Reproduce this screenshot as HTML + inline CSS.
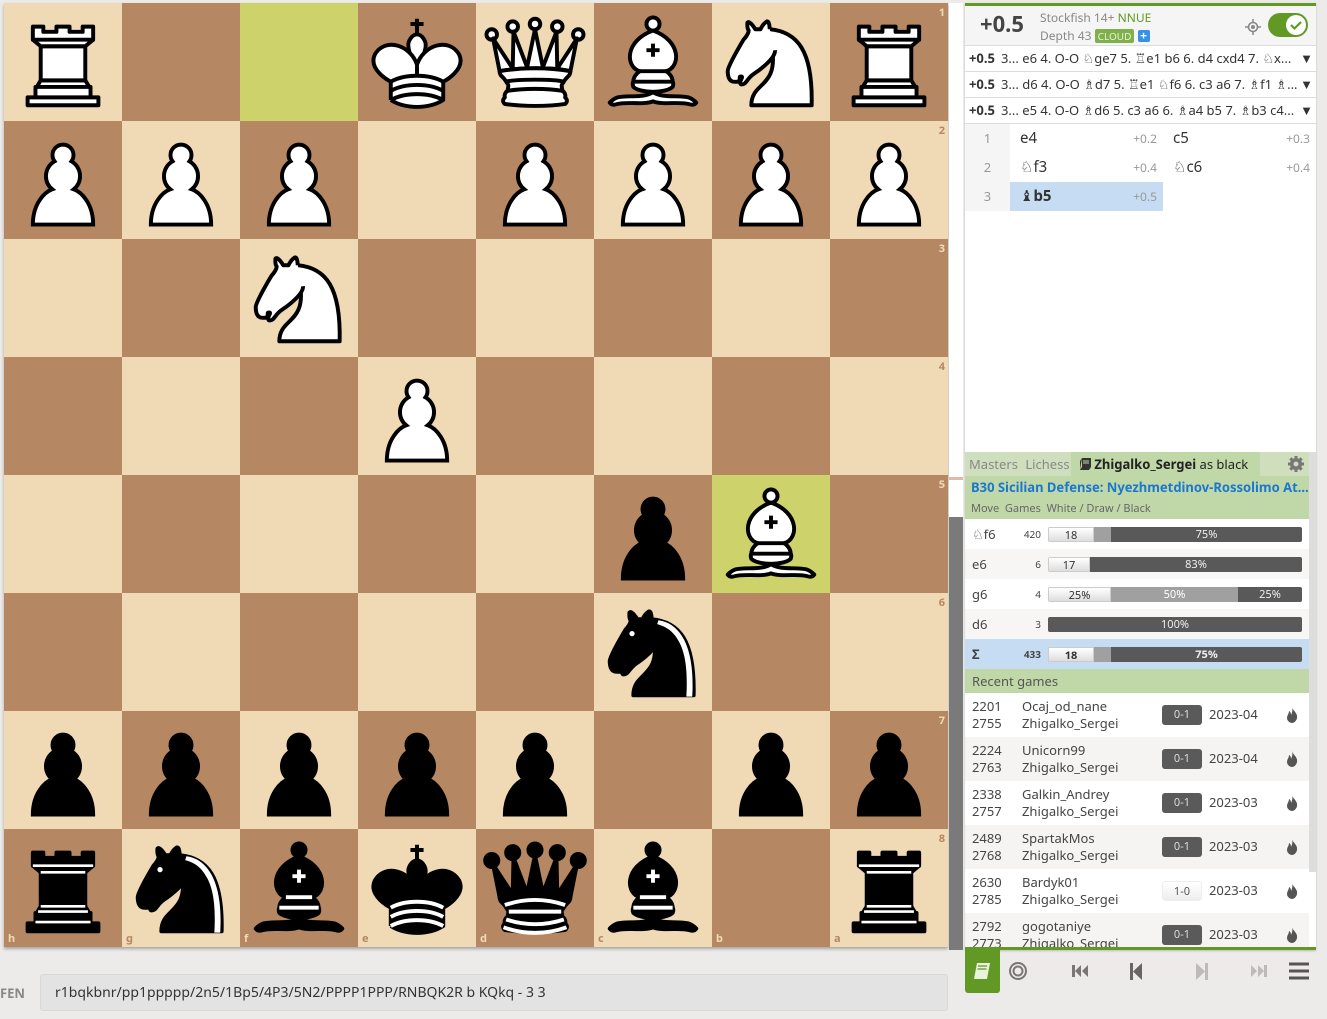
<!DOCTYPE html>
<html><head><meta charset="utf-8"><style>
*{box-sizing:border-box;margin:0;padding:0}
body{width:1327px;height:1019px;background:#ecebe9;font-family:"Noto Sans","Liberation Sans","DejaVu Sans",sans-serif;position:relative;overflow:hidden;color:#4d4d4d}
#board{position:absolute;left:4px;top:3px;width:944px;height:944px;display:grid;grid-template-columns:repeat(8,118px);grid-template-rows:repeat(8,118px);box-shadow:0 2px 3px rgba(0,0,0,.3)}
.s{position:relative;background:#f0d9b5}
.d{background:#b58863}
.h{background:#cdd26a}
.s svg{position:absolute;left:0;top:0;width:118px;height:118px}
.cr{position:absolute;right:3px;top:2px;font-size:11px;font-weight:bold}
.cf{position:absolute;left:4px;bottom:1px;font-size:11px;font-weight:bold}
.s .cr,.s .cf{color:#b58863}.d .cr,.d .cf{color:#f0d9b5}
#gauge{position:absolute;left:949px;top:3px;width:14px;height:947px;background:#7a7a7a}
#gauge .wt{position:absolute;left:0;top:0;width:14px;height:514px;background:#fff}
#gauge .rl{position:absolute;left:0;top:474px;width:14px;height:3px;background:#e8b6a6}
#panel{position:absolute;left:965px;top:3px;width:351px;height:947px;background:#fff;border-top:3px solid #629924;border-bottom:3px solid #629924;box-shadow:0 1px 2px rgba(0,0,0,.2)}
.ceh{height:40px;background:#f5f5f5;border-bottom:1px solid #ddd;position:relative}
.pv{height:26px;border-bottom:1px solid #ddd;font-size:13px;line-height:25px;padding-left:4px;white-space:nowrap;position:relative;color:#333}
.pv b{margin-right:6px}
.pv .tri{position:absolute;right:3px;top:0;font-size:13px}
.mv{position:relative;height:29px;font-size:15px}
.mv .i{position:absolute;left:0;top:0;width:45px;height:29px;background:#f5f5f5;text-align:center;line-height:29px;color:#999;font-size:13px}
.mv .m{position:absolute;top:0;height:29px;width:153px;line-height:29px;padding-left:10px;color:#333}
.mv .m span{position:absolute;right:6px;font-size:12px;color:#999}
#exp{position:absolute;left:0;top:446px;width:344px;bottom:0;font-size:12px}
.tabs{height:24px;background:#cfdfbe;position:relative;font-size:13px;line-height:24px;color:#888}
.op{height:23px;background:#c0d8a8;color:#1b78d0;font-weight:bold;font-size:13px;line-height:23px;padding-left:6px;white-space:nowrap;overflow:hidden}
.hd{height:20px;background:#c0d8a8;color:#666;font-size:11px;line-height:20px;padding-left:6px}
.r{height:30px;position:relative;font-size:13px;line-height:30px;color:#444}
.r .mm{position:absolute;left:7px}
.r .n{position:absolute;left:50px;width:26px;text-align:right;font-size:10px}
.bar{position:absolute;left:83px;top:8px;width:254px;height:15px;border-radius:2px;overflow:hidden;display:flex;font-size:11px;line-height:15px;text-align:center}
.bw{background:linear-gradient(#fff,#ddd);color:#333;border:1px solid #ccc}
.bd{background:#a0a0a0;color:#fff}
.bb{background:#595959;color:#eee}
.rg{height:24px;background:#c0d8a8;line-height:24px;padding-left:7px;font-size:13px;color:#555}
.g{height:44px;position:relative;font-size:13px;color:#444;line-height:17px}
.g .e{position:absolute;left:7px;top:5px}
.g .nm{position:absolute;left:57px;top:5px}
.g .res{position:absolute;left:197px;top:12px;width:40px;height:20px;border-radius:3px;background:#5a5a5a;color:#ddd;font-size:11px;text-align:center;line-height:20px}
.g .res.wr{background:linear-gradient(#fff,#eee);color:#555;border:1px solid #eee}
.g .dt{position:absolute;left:244px;top:13px}
.g .fl{position:absolute;left:321px;top:14px;width:12px;height:16px}
.ctl{position:absolute;top:953px;height:40px}
</style></head><body>
<svg width="0" height="0" style="position:absolute">
<defs>
<symbol id="P" viewBox="0 0 45 45"><path d="m22.5 9c-2.21 0-4 1.79-4 4 0 .89.29 1.71.78 2.38C17.33 16.5 16 18.59 16 21c0 2.030.94 3.84 2.41 5.03C15.41 27.09 11 31.58 11 39.5H34C34 31.58 29.59 27.090 26.59 26.03 28.06 24.84 29 23.03 29 21 29 18.59 27.67 16.5 25.72 15.38 26.21 14.71 26.5 13.89 26.5 13c0-2.21-1.79-4-4-4z" stroke-width="1.5"/></symbol>
<symbol id="R" viewBox="0 0 45 45"><g stroke-width="1.5" stroke-linejoin="round"><path d="M9 39h27v-3H9zM12.5 32l1.5-2.5h17l1.5 2.5zM12 36v-4h21v4z"/><path d="M14 29.5v-13h17v13z"/><path d="M14 16.5L11 14h23l-3 2.5zM11 14V9h4v2h5V9h5v2h5V9h4v5z"/></g></symbol>
<symbol id="Rb" viewBox="0 0 45 45"><g stroke-width="1.5" stroke-linejoin="round"><path d="M9 39h27v-3H9zM12.5 32l1.5-2.5h17l1.5 2.5zM12 36v-4h21v4z"/><path d="M14 29.5v-13h17v13z"/><path d="M14 16.5L11 14h23l-3 2.5zM11 14V9h4v2h5V9h5v2h5V9h4v5z"/><path d="M12 35.5h21M13 31.5h19M14 29.5h17M14 16.5h17M11 14h23" stroke="#fff" stroke-width="1"/></g></symbol>
<symbol id="N" viewBox="0 0 45 45"><g stroke-width="1.5" stroke-linejoin="round"><path d="M22 10c10.5 1 16.5 8 16 29H15c0-9 10-6.5 8-21"/><path d="M24 18c.38 2.91-5.55 7.37-8 9-3 2-2.82 4.34-5 4-1.04-.94 1.41-3.04 0-3-1 0 .19 1.23-1 2-1 0-4 1-4-4 0-2 6-12 6-12s1.89-1.9 2-3.5c-.73-.99-.5-2-.5-3 1-1 3 2.5 3 2.5h2s.78-1.99 2.5-3c1 0 1 3 1 3"/></g></symbol>
<symbol id="Nb" viewBox="0 0 45 45"><g stroke-width="1.5" stroke-linejoin="round"><path d="M22 10c10.5 1 16.5 8 16 29H15c0-9 10-6.5 8-21"/><path d="M24 18c.38 2.91-5.55 7.37-8 9-3 2-2.82 4.34-5 4-1.04-.94 1.41-3.04 0-3-1 0 .19 1.23-1 2-1 0-4 1-4-4 0-2 6-12 6-12s1.89-1.9 2-3.5c-.73-.99-.5-2-.5-3 1-1 3 2.5 3 2.5h2s.78-1.99 2.5-3c1 0 1 3 1 3"/><path d="M24.55 10.4l-.45 1.45.5.15c3.15 1 5.65 2.49 7.9 6.75S35.75 29.06 35.25 39l-.05.5h2.25l.05-.5c.5-10.06-.88-16.85-3.25-21.34-2.37-4.49-5.79-6.64-9.19-7.16z" fill="#fff" stroke="none"/><circle cx="14.5" cy="15.5" r="1" fill="#fff" stroke="none"/></g></symbol>
</defs></svg>
<style>
.wp use{fill:#fff;stroke:#000}
.bp use{fill:#000;stroke:#000}
</style>
<div id="board">
<div class="s"><svg class="wp"><use href="#R"/></svg></div>
<div class="s d"></div>
<div class="s h"></div>
<div class="s d"><svg class="wp" viewBox="0 0 45 45"><g fill="#fff" stroke="#000" stroke-width="1.5" stroke-linejoin="round"><path d="M22.5 11.63V6M20 8h5" fill="none"/><path d="M22.5 25s4.5-7.5 3-10.5c0 0-1-2.5-3-2.5s-3 2.5-3 2.5c-1.5 3 3 10.5 3 10.5"/><path d="M12.5 37c5.5 3.5 14.5 3.5 20 0v-7s9-4.5 6-10.5c-4-6.5-13.5-3.5-16 4V27v-3.5c-2.5-7.5-12-10.5-16-4-3 6 6 10.5 6 10.5v7"/><path d="M12.5 30c5.5-3 14.5-3 20 0M12.5 33.5c5.5-3 14.5-3 20 0M12.5 37c5.5-3 14.5-3 20 0" fill="none"/></g></svg></div>
<div class="s"><svg viewBox="0 0 45 45"><g fill="#fff" stroke="#000" stroke-width="1.5" stroke-linejoin="round"><circle cx="6" cy="12" r="2"/><circle cx="14" cy="9" r="2"/><circle cx="22.5" cy="8" r="2"/><circle cx="31" cy="9" r="2"/><circle cx="39" cy="12" r="2"/><path d="M9 26c8.5-1.5 21-1.5 27 0l2.5-12.5L31 25l-.3-14.1-5.2 13.6-3-14.5-3 14.5-5.2-13.6L14 25 6.5 13.5z"/><path d="M9 26c0 2 1.5 2 2.5 4 1 1.5 1 1 .5 3.5-1.5 1-1 2.5-1 2.5-1.5 1.5 0 2.5 0 2.5 6.5 1 16.5 1 23 0 0 0 1.5-1 0-2.5 0 0 .5-1.5-1-2.5-.5-2.5-.5-2 .5-3.5 1-2 2.5-2 2.5-4-8.5-1.5-18.5-1.5-27 0z"/><path d="M11.5 30c3.5-1 18.5-1 22 0M12 33.5c6-1 15-1 21 0" fill="none"/></g></svg></div>
<div class="s d"><svg viewBox="0 0 45 45"><g fill="#fff" stroke="#000" stroke-width="1.5" stroke-linejoin="round"><path d="M9 36c3.39-.97 10.11.43 13.5-2 3.39 2.43 10.11 1.03 13.5 2 0 0 1.65.54 3 2-.68.97-1.65.99-3 .5-3.39-.97-10.11.46-13.5-1-3.39 1.46-10.11.03-13.5 1-1.35.49-2.32.47-3-.5 1.35-1.46 3-2 3-2z"/><path d="M15 32c2.5 2.5 12.5 2.5 15 0 .5-1.5 0-2 0-2 0-2.5-2.5-4-2.5-4 5.5-1.5 6-11.5-5-15.5-11 4-10.5 14-5 15.5 0 0-2.5 1.5-2.5 4 0 0-.5.5 0 2z"/><path d="M25 8a2.5 2.5 0 1 1-5 0 2.5 2.5 0 1 1 5 0z"/><path d="M17.5 26h10M15 30h15M22.5 15.5v5M20 18h5" fill="none"/></g></svg></div>
<div class="s"><svg class="wp"><use href="#N"/></svg></div>
<div class="s d"><svg class="wp"><use href="#R"/></svg><span class="cr">1</span></div>

<div class="s d"><svg class="wp"><use href="#P"/></svg></div>
<div class="s"><svg class="wp"><use href="#P"/></svg></div>
<div class="s d"><svg class="wp"><use href="#P"/></svg></div>
<div class="s"></div>
<div class="s d"><svg class="wp"><use href="#P"/></svg></div>
<div class="s"><svg class="wp"><use href="#P"/></svg></div>
<div class="s d"><svg class="wp"><use href="#P"/></svg></div>
<div class="s"><svg class="wp"><use href="#P"/></svg><span class="cr">2</span></div>

<div class="s"></div><div class="s d"></div>
<div class="s"><svg class="wp"><use href="#N"/></svg></div>
<div class="s d"></div><div class="s"></div><div class="s d"></div><div class="s"></div><div class="s d"><span class="cr">3</span></div>

<div class="s d"></div><div class="s"></div><div class="s d"></div>
<div class="s"><svg class="wp"><use href="#P"/></svg></div>
<div class="s d"></div><div class="s"></div><div class="s d"></div><div class="s"><span class="cr">4</span></div>

<div class="s"></div><div class="s d"></div><div class="s"></div><div class="s d"></div><div class="s"></div>
<div class="s d"><svg class="bp"><use href="#P"/></svg></div>
<div class="s h"><svg viewBox="0 0 45 45"><g fill="#fff" stroke="#000" stroke-width="1.5" stroke-linejoin="round"><path d="M9 36c3.39-.97 10.11.43 13.5-2 3.39 2.43 10.11 1.03 13.5 2 0 0 1.65.54 3 2-.68.97-1.65.99-3 .5-3.39-.97-10.11.46-13.5-1-3.39 1.46-10.11.03-13.5 1-1.35.49-2.32.47-3-.5 1.35-1.46 3-2 3-2z"/><path d="M15 32c2.5 2.5 12.5 2.5 15 0 .5-1.5 0-2 0-2 0-2.5-2.5-4-2.5-4 5.5-1.5 6-11.5-5-15.5-11 4-10.5 14-5 15.5 0 0-2.5 1.5-2.5 4 0 0-.5.5 0 2z"/><path d="M25 8a2.5 2.5 0 1 1-5 0 2.5 2.5 0 1 1 5 0z"/><path d="M17.5 26h10M15 30h15M22.5 15.5v5M20 18h5" fill="none"/></g></svg></div>
<div class="s d"><span class="cr">5</span></div>

<div class="s d"></div><div class="s"></div><div class="s d"></div><div class="s"></div><div class="s d"></div>
<div class="s"><svg class="bp"><use href="#Nb"/></svg></div>
<div class="s d"></div><div class="s"><span class="cr">6</span></div>

<div class="s"><svg class="bp"><use href="#P"/></svg></div>
<div class="s d"><svg class="bp"><use href="#P"/></svg></div>
<div class="s"><svg class="bp"><use href="#P"/></svg></div>
<div class="s d"><svg class="bp"><use href="#P"/></svg></div>
<div class="s"><svg class="bp"><use href="#P"/></svg></div>
<div class="s d"></div>
<div class="s"><svg class="bp"><use href="#P"/></svg></div>
<div class="s d"><svg class="bp"><use href="#P"/></svg><span class="cr">7</span></div>

<div class="s d"><svg class="bp"><use href="#Rb"/></svg><span class="cf">h</span></div>
<div class="s"><svg class="bp"><use href="#Nb"/></svg><span class="cf">g</span></div>
<div class="s d"><svg viewBox="0 0 45 45"><g fill="#000" stroke="#000" stroke-width="1.5" stroke-linejoin="round"><path d="M9 36c3.39-.97 10.11.43 13.5-2 3.39 2.43 10.11 1.03 13.5 2 0 0 1.65.54 3 2-.68.97-1.65.99-3 .5-3.39-.97-10.11.46-13.5-1-3.39 1.46-10.11.03-13.5 1-1.35.49-2.32.47-3-.5 1.35-1.46 3-2 3-2z"/><path d="M15 32c2.5 2.5 12.5 2.5 15 0 .5-1.5 0-2 0-2 0-2.5-2.5-4-2.5-4 5.5-1.5 6-11.5-5-15.5-11 4-10.5 14-5 15.5 0 0-2.5 1.5-2.5 4 0 0-.5.5 0 2z"/><path d="M25 8a2.5 2.5 0 1 1-5 0 2.5 2.5 0 1 1 5 0z"/><path d="M17.5 26h10M15 30h15M22.5 15.5v5M20 18h5" fill="none" stroke="#fff"/></g></svg><span class="cf">f</span></div>
<div class="s"><svg viewBox="0 0 45 45"><g fill="#000" stroke="#000" stroke-width="1.5" stroke-linejoin="round"><path d="M22.5 11.63V6M20 8h5" fill="none"/><path d="M22.5 25s4.5-7.5 3-10.5c0 0-1-2.5-3-2.5s-3 2.5-3 2.5c-1.5 3 3 10.5 3 10.5"/><path d="M12.5 37c5.5 3.5 14.5 3.5 20 0v-7s9-4.5 6-10.5c-4-6.5-13.5-3.5-16 4V27v-3.5c-2.5-7.5-12-10.5-16-4-3 6 6 10.5 6 10.5v7"/><path d="M12.5 30c5.5-3 14.5-3 20 0M12.5 33.5c5.5-3 14.5-3 20 0M12.5 37c5.5-3 14.5-3 20 0" fill="none" stroke="#fff"/></g></svg><span class="cf">e</span></div>
<div class="s d"><svg viewBox="0 0 45 45"><g fill="#000" stroke="#000" stroke-width="1.5" stroke-linejoin="round"><circle cx="6" cy="12" r="2.5"/><circle cx="14" cy="9" r="2.5"/><circle cx="22.5" cy="8" r="2.5"/><circle cx="31" cy="9" r="2.5"/><circle cx="39" cy="12" r="2.5"/><path d="M9 26c8.5-1.5 21-1.5 27 0l2.5-12.5L31 25l-.3-14.1-5.2 13.6-3-14.5-3 14.5-5.2-13.6L14 25 6.5 13.5z"/><path d="M9 26c0 2 1.5 2 2.5 4 1 1.5 1 1 .5 3.5-1.5 1-1 2.5-1 2.5-1.5 1.5 0 2.5 0 2.5 6.5 1 16.5 1 23 0 0 0 1.5-1 0-2.5 0 0 .5-1.5-1-2.5-.5-2.5-.5-2 .5-3.5 1-2 2.5-2 2.5-4-8.5-1.5-18.5-1.5-27 0z"/><path d="M11 29a35 35 1 0 1 23 0M12.5 31.5h20M11.5 34.5a35 35 1 0 0 22 0M10.5 37.5a35 35 1 0 0 24 0" fill="none" stroke="#fff"/></g></svg><span class="cf">d</span></div>
<div class="s"><svg viewBox="0 0 45 45"><g fill="#000" stroke="#000" stroke-width="1.5" stroke-linejoin="round"><path d="M9 36c3.39-.97 10.11.43 13.5-2 3.39 2.43 10.11 1.03 13.5 2 0 0 1.65.54 3 2-.68.97-1.65.99-3 .5-3.39-.97-10.11.46-13.5-1-3.39 1.46-10.11.03-13.5 1-1.35.49-2.32.47-3-.5 1.35-1.46 3-2 3-2z"/><path d="M15 32c2.5 2.5 12.5 2.5 15 0 .5-1.5 0-2 0-2 0-2.5-2.5-4-2.5-4 5.5-1.5 6-11.5-5-15.5-11 4-10.5 14-5 15.5 0 0-2.5 1.5-2.5 4 0 0-.5.5 0 2z"/><path d="M25 8a2.5 2.5 0 1 1-5 0 2.5 2.5 0 1 1 5 0z"/><path d="M17.5 26h10M15 30h15M22.5 15.5v5M20 18h5" fill="none" stroke="#fff"/></g></svg><span class="cf">c</span></div>
<div class="s d"><span class="cf">b</span></div>
<div class="s"><svg class="bp"><use href="#Rb"/></svg><span class="cf">a</span><span class="cr">8</span></div>
</div>

<div id="gauge"><div class="wt"></div><div class="rl"></div></div>

<div id="panel">
<div class="ceh">
<div style="position:absolute;left:15px;top:3px;font-size:22px;color:#444;font-weight:bold">+0.5</div>
<div style="position:absolute;left:75px;top:3px;font-size:12px;color:#888">Stockfish 14+ <span style="color:#629924">NNUE</span></div>
<div style="position:absolute;left:75px;top:21px;font-size:12px;color:#888">Depth 43 <span style="background:#7fb04a;color:#e8f3dc;font-size:10px;padding:0 3px;border-radius:2px">CLOUD</span> <span style="display:inline-block;width:12px;height:12px;background:#3692e7;color:#fff;font-size:12px;line-height:11px;text-align:center;border-radius:2px;font-weight:bold">+</span></div>
<svg style="position:absolute;left:280px;top:13px" width="16" height="16" viewBox="0 0 16 16"><circle cx="8" cy="8" r="4.5" fill="none" stroke="#888" stroke-width="1.6"/><circle cx="8" cy="8" r="2" fill="#888"/><path d="M8 0v3M8 13v3M0 8h3M13 8h3" stroke="#888" stroke-width="1.5"/></svg>
<div style="position:absolute;left:303px;top:7px;width:40px;height:24px;background:#629924;border-radius:12px"><div style="position:absolute;right:2px;top:2px;width:20px;height:20px;background:#fff;border-radius:50%"><svg width="20" height="20" viewBox="0 0 20 20"><path d="M5 10l3.5 3.5L15 7" fill="none" stroke="#629924" stroke-width="2.2"/></svg></div></div>
</div>
<div class="pv"><b>+0.5</b>3... e6 4. O-O ♘ge7 5. ♖e1 b6 6. d4 cxd4 7. ♘x...<span class="tri">▼</span></div>
<div class="pv"><b>+0.5</b>3... d6 4. O-O ♗d7 5. ♖e1 ♘f6 6. c3 a6 7. ♗f1 ♗...<span class="tri">▼</span></div>
<div class="pv"><b>+0.5</b>3... e5 4. O-O ♗d6 5. c3 a6 6. ♗a4 b5 7. ♗b3 c4...<span class="tri">▼</span></div>
<div class="mv"><div class="i">1</div><div class="m" style="left:45px">e4<span>+0.2</span></div><div class="m" style="left:198px">c5<span>+0.3</span></div></div>
<div class="mv"><div class="i">2</div><div class="m" style="left:45px">♘f3<span>+0.4</span></div><div class="m" style="left:198px">♘c6<span>+0.4</span></div></div>
<div class="mv"><div class="i">3</div><div class="m" style="left:45px;background:#c6dcf2;font-weight:bold">♝b5<span style="font-weight:normal">+0.5</span></div></div>

<div id="exp">
<div class="tabs"><span style="margin-left:4px">Masters</span> <span style="margin-left:4px">Lichess</span><span style="position:absolute;left:106px;top:0;width:189px;height:24px;background:#c0d8a8;color:#222;padding-left:8px"><svg width="12" height="12" viewBox="0 0 12 12" style="vertical-align:-1px"><path d="M3 0h9v9l-2 3H1l2-3z M1 12V3l2-3" fill="#333"/><path d="M4 3h6M4 5h6" stroke="#c0d8a8"/></svg> <b>Zhigalko_Sergei</b> as black</span><svg style="position:absolute;right:4px;top:3px" width="18" height="18" viewBox="0 0 18 18"><circle cx="9" cy="9" r="6" fill="#777"/><path d="M9 1v16M1 9h16M3.3 3.3l11.4 11.4M14.7 3.3L3.3 14.7" stroke="#777" stroke-width="3"/><circle cx="9" cy="9" r="2.5" fill="#cfdfbe"/></svg></div>
<div class="op">B30 Sicilian Defense: Nyezhmetdinov-Rossolimo At...</div>
<div class="hd">Move&nbsp; Games&nbsp; White / Draw / Black</div>
<div>
<div class="r" style="background:#fff"><span class="mm">♘f6</span><span class="n">420</span><div class="bar"><div class="bw" style="width:46px">18</div><div class="bd" style="width:17px"></div><div class="bb" style="flex:1">75%</div></div></div>
<div class="r" style="background:#f7f6f5"><span class="mm">e6</span><span class="n">6</span><div class="bar"><div class="bw" style="width:42px">17</div><div class="bb" style="flex:1">83%</div></div></div>
<div class="r" style="background:#fff"><span class="mm">g6</span><span class="n">4</span><div class="bar"><div class="bw" style="width:63px">25%</div><div class="bd" style="width:127px">50%</div><div class="bb" style="flex:1">25%</div></div></div>
<div class="r" style="background:#f7f6f5"><span class="mm">d6</span><span class="n">3</span><div class="bar"><div class="bb" style="flex:1">100%</div></div></div>
<div class="r" style="background:#c6dcf2;font-weight:bold"><span class="mm">Σ</span><span class="n">433</span><div class="bar" style="font-weight:bold"><div class="bw" style="width:46px">18</div><div class="bd" style="width:17px"></div><div class="bb" style="flex:1">75%</div></div></div>
</div>
<div class="rg">Recent games</div>
<div>
<div class="g" style="background:#fff"><span class="e">2201<br>2755</span><span class="nm">Ocaj_od_nane<br>Zhigalko_Sergei</span><span class="res">0-1</span><span class="dt">2023-04</span><svg class="fl" viewBox="0 0 12 16"><path d="M6 0C7 4 12 6 11 11c-.5 3-3 5-5 5s-5-2-5-5C1 8 3 7 3 4c2 1 2 3 2 4C6 6 7 3 6 0z" fill="#555"/></svg></div>
<div class="g" style="background:#f5f4f3"><span class="e">2224<br>2763</span><span class="nm">Unicorn99<br>Zhigalko_Sergei</span><span class="res">0-1</span><span class="dt">2023-04</span><svg class="fl" viewBox="0 0 12 16"><path d="M6 0C7 4 12 6 11 11c-.5 3-3 5-5 5s-5-2-5-5C1 8 3 7 3 4c2 1 2 3 2 4C6 6 7 3 6 0z" fill="#555"/></svg></div>
<div class="g" style="background:#fff"><span class="e">2338<br>2757</span><span class="nm">Galkin_Andrey<br>Zhigalko_Sergei</span><span class="res">0-1</span><span class="dt">2023-03</span><svg class="fl" viewBox="0 0 12 16"><path d="M6 0C7 4 12 6 11 11c-.5 3-3 5-5 5s-5-2-5-5C1 8 3 7 3 4c2 1 2 3 2 4C6 6 7 3 6 0z" fill="#555"/></svg></div>
<div class="g" style="background:#f5f4f3"><span class="e">2489<br>2768</span><span class="nm">SpartakMos<br>Zhigalko_Sergei</span><span class="res">0-1</span><span class="dt">2023-03</span><svg class="fl" viewBox="0 0 12 16"><path d="M6 0C7 4 12 6 11 11c-.5 3-3 5-5 5s-5-2-5-5C1 8 3 7 3 4c2 1 2 3 2 4C6 6 7 3 6 0z" fill="#555"/></svg></div>
<div class="g" style="background:#fff"><span class="e">2630<br>2785</span><span class="nm">Bardyk01<br>Zhigalko_Sergei</span><span class="res wr">1-0</span><span class="dt">2023-03</span><svg class="fl" viewBox="0 0 12 16"><path d="M6 0C7 4 12 6 11 11c-.5 3-3 5-5 5s-5-2-5-5C1 8 3 7 3 4c2 1 2 3 2 4C6 6 7 3 6 0z" fill="#555"/></svg></div>
<div class="g" style="background:#f5f4f3;height:34px;overflow:hidden"><span class="e">2792<br>2773</span><span class="nm">gogotaniye<br>Zhigalko_Sergei</span><span class="res">0-1</span><span class="dt">2023-03</span><svg class="fl" viewBox="0 0 12 16"><path d="M6 0C7 4 12 6 11 11c-.5 3-3 5-5 5s-5-2-5-5C1 8 3 7 3 4c2 1 2 3 2 4C6 6 7 3 6 0z" fill="#555"/></svg></div>
</div>
</div>
<div style="position:absolute;right:0;top:446px;width:7px;height:420px;background:#ddd"></div>
</div>

<div style="position:absolute;left:965px;top:950px;width:35px;height:43px;background:#629924;border-radius:0 0 3px 3px"><svg width="35" height="43" viewBox="0 0 35 43"><path d="M12 13h13l-3 16H9z" fill="#e8f3dc"/><path d="M13 16h9M12.5 19h9" stroke="#629924" stroke-width="1.3"/></svg></div>
<svg class="ctl" style="left:1007px" width="22" height="40" viewBox="0 0 22 40"><circle cx="11" cy="18" r="8" fill="none" stroke="#777" stroke-width="2"/><circle cx="11" cy="18" r="4.5" fill="none" stroke="#777" stroke-width="2"/></svg>
<svg class="ctl" style="left:1070px" width="20" height="40" viewBox="0 0 20 40"><path d="M2 12h3v12H2zM11 12v12l-6-6zM18 12v12l-6-6z" fill="#777"/></svg>
<svg class="ctl" style="left:1128px" width="16" height="40" viewBox="0 0 16 40"><path d="M2 10h3v17H2zM14 10v17l-9-8.5z" fill="#666"/></svg>
<svg class="ctl" style="left:1194px" width="16" height="40" viewBox="0 0 16 40"><path d="M11 10h3v17h-3zM2 10v17l9-8.5z" fill="#bbb"/></svg>
<svg class="ctl" style="left:1249px" width="20" height="40" viewBox="0 0 20 40"><path d="M15 12h3v12h-3zM2 12v12l6-6zM9 12v12l6-6z" fill="#bbb"/></svg>
<svg class="ctl" style="left:1288px" width="22" height="40" viewBox="0 0 22 40"><path d="M1 11h20M1 18h20M1 25h20" stroke="#555" stroke-width="3"/></svg>

<div style="position:absolute;left:0;top:984px;font-size:13px;color:#888;font-weight:bold">FEN</div>
<div style="position:absolute;left:40px;top:974px;width:908px;height:37px;background:#e3e3e3;border:1px solid #d8d8d8;border-radius:3px;font-size:14px;line-height:35px;padding-left:14px;color:#333">r1bqkbnr/pp1ppppp/2n5/1Bp5/4P3/5N2/PPPP1PPP/RNBQK2R b KQkq - 3 3</div>
</body></html>
